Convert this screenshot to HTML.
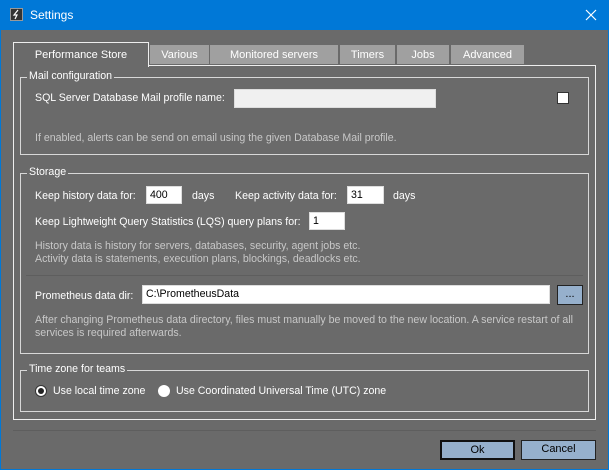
<!DOCTYPE html>
<html><head><style>
*{box-sizing:border-box;margin:0;padding:0}
body{width:609px;height:470px;overflow:hidden;background:#0078d7;font-family:"Liberation Sans",sans-serif;font-size:10.6px;color:#fff}
.win{position:absolute;left:1px;top:30px;width:607px;height:439px;background:#6a6a6a}
.a{position:absolute;white-space:nowrap}
.tab{position:absolute;top:45px;height:19px;background:#a0a0a0;color:#fff;text-align:center;line-height:20px;font-size:11px}
.box{position:absolute;border:1px solid #d8d8d8}
.lg{position:absolute;background:#6a6a6a;padding:0 2px;top:-8px;left:6px}
.inp{position:absolute;background:#fff;border:1px solid #ddd;color:#000;padding-left:3px;line-height:17px}
.g{color:#c8c8c8}
.btn{position:absolute;background:#96b0cc;color:#000;text-align:center;line-height:17px;font-size:11px}
</style></head><body>
<div class="a" style="left:10px;top:8px;width:13px;height:13px;background:#333;border:1px solid #999"></div>
<svg class="a" style="left:10px;top:8px" width="13" height="13"><path d="M8 2 L4 7 H7 L5 11" stroke="#fff" fill="none" stroke-width="1.2"/></svg>
<div class="a" style="left:30px;top:8px;font-size:12px">Settings</div>
<svg class="a" style="left:585px;top:9px" width="12" height="12"><path d="M1 1L11 11M11 1L1 11" stroke="#fff" stroke-width="1.2"/></svg>
<div class="win"></div>
<div class="box" style="left:13px;top:65px;width:583px;height:355px;border-color:#eee"></div>
<div class="a" style="left:13px;top:42px;width:136px;height:25px;background:#6a6a6a;border:1px solid #eee;border-bottom:none;text-align:center;line-height:24px;font-size:11px">Performance Store</div>
<div class="tab" style="left:150px;width:59px">Various</div>
<div class="tab" style="left:210px;width:128px">Monitored servers</div>
<div class="tab" style="left:340px;width:55px">Timers</div>
<div class="tab" style="left:397px;width:52px">Jobs</div>
<div class="tab" style="left:451px;width:73px">Advanced</div>

<div class="box" style="left:20px;top:77px;width:569px;height:78px"><span class="lg">Mail configuration</span></div>
<div class="a" style="left:35px;top:92px">SQL Server Database Mail profile name:</div>
<div class="inp" style="left:234px;top:89px;width:202px;height:19px;background:#f0f0f0"></div>
<div class="a" style="left:557px;top:92px;width:12px;height:12px;background:#fff;border:1px solid #333"></div>
<div class="a g" style="left:35px;top:132px">If enabled, alerts can be send on email using the given Database Mail profile.</div>

<div class="box" style="left:20px;top:173px;width:569px;height:181px"><span class="lg">Storage</span></div>
<div class="a" style="left:35px;top:190px">Keep history data for:</div>
<div class="inp" style="left:146px;top:186px;width:36px;height:18px">400</div>
<div class="a" style="left:192px;top:190px">days</div>
<div class="a" style="left:235px;top:190px">Keep activity data for:</div>
<div class="inp" style="left:347px;top:186px;width:37px;height:18px">31</div>
<div class="a" style="left:393px;top:190px">days</div>
<div class="a" style="left:35px;top:216px">Keep Lightweight Query Statistics (LQS) query plans for:</div>
<div class="inp" style="left:309px;top:212px;width:36px;height:18px">1</div>
<div class="a g" style="left:35px;top:240px;line-height:13px">History data is history for servers, databases, security, agent jobs etc.<br>Activity data is statements, execution plans, blockings, deadlocks etc.</div>
<div class="a" style="left:26px;top:275px;width:557px;height:1px;background:#5e5e5e"></div>
<div class="a" style="left:35px;top:290px">Prometheus data dir:</div>
<div class="inp" style="left:142px;top:285px;width:408px;height:19px">C:\PrometheusData</div>
<div class="btn" style="left:557px;top:285px;width:26px;height:20px;border:1px solid #222">...</div>
<div class="a g" style="left:35px;top:314px;line-height:13px">After changing Prometheus data directory, files must manually be moved to the new location. A service restart of all<br>services is required afterwards.</div>

<div class="box" style="left:20px;top:370px;width:569px;height:42px"><span class="lg">Time zone for teams</span></div>
<div class="a" style="left:35px;top:385px;width:12px;height:12px;border-radius:50%;background:#fff;border:1px solid #333"></div>
<div class="a" style="left:38px;top:388px;width:6px;height:6px;border-radius:50%;background:#222"></div>
<div class="a" style="left:53px;top:385px">Use local time zone</div>
<div class="a" style="left:158px;top:385px;width:12px;height:12px;border-radius:50%;background:#fff"></div>
<div class="a" style="left:176px;top:385px">Use Coordinated Universal Time (UTC) zone</div>

<div class="a" style="left:13px;top:430px;width:583px;height:1px;background:#5e5e5e"></div>
<div class="btn" style="left:440px;top:440px;width:75px;height:20px;border:2px solid #111">Ok</div>
<div class="btn" style="left:521px;top:440px;width:75px;height:20px;border:1px solid #222">Cancel</div>
</body></html>
